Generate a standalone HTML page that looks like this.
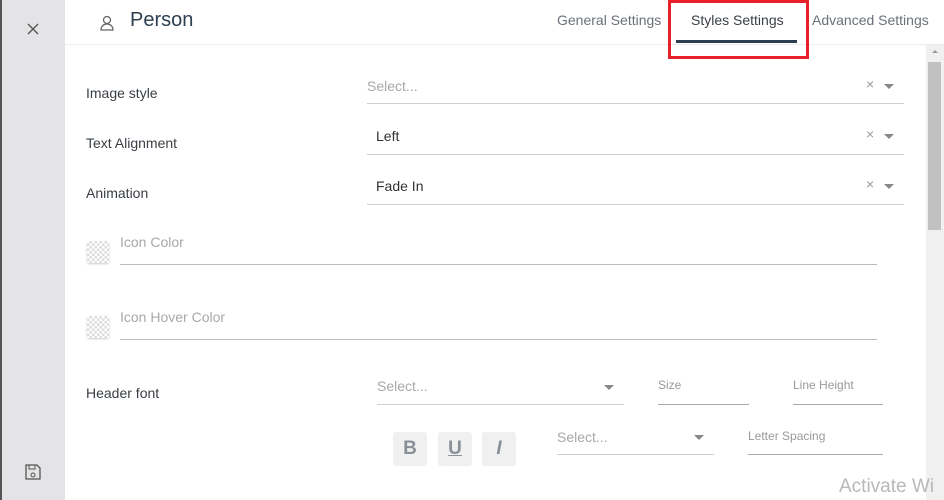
<!DOCTYPE html>
<html><head><style>
*{margin:0;padding:0;box-sizing:border-box}
body{width:944px;height:500px;overflow:hidden;background:#fff;font-family:"Liberation Sans",Arial,sans-serif;position:relative}
.a{position:absolute}
.lbl{font-size:14px;color:#3a3f45}
.ph{font-size:14px;color:#a8a8a8}
.val{font-size:14px;color:#333}
.line{height:1px;background:#d0d0d0}
.x{font-size:14px;color:#999}
.car{width:0;height:0;border-left:5px solid transparent;border-right:5px solid transparent;border-top:5px solid #888}
.sm{font-size:12px;color:#999}
.btn{width:34px;height:34px;background:#f0f0f0;border-radius:3px;color:#8a9099;font-weight:bold;font-size:19px;text-align:center;line-height:34px}
.sw{width:22px;height:22px;border-radius:2px;box-shadow:0 1px 2px rgba(0,0,0,.2);background:
repeating-conic-gradient(#ddd 0 25%,#fff 0 50%) 0 0/5px 5px}
</style></head><body>
<div class="a" style="left:0;top:0;width:65px;height:500px;background:#e4e4e6"></div>
<div class="a" style="left:0;top:0;width:2px;height:500px;background:#555"></div>
<svg class="a" style="left:27px;top:23px" width="12" height="12"><path d="M1 1L11 11M11 1L1 11" stroke="#555" stroke-width="1.4"/></svg>
<svg class="a" style="left:24px;top:463px" width="18" height="18" viewBox="0 0 18 18"><path d="M2 2h11l3 3v11H2z" fill="none" stroke="#555" stroke-width="1.3"/><rect x="5" y="2" width="6" height="4" fill="none" stroke="#555"/><circle cx="9" cy="12" r="2" fill="none" stroke="#555"/></svg>
<div class="a" style="left:65px;top:44px;width:879px;height:1px;background:#ececec"></div>
<svg class="a" style="left:99px;top:14px" width="16" height="18" viewBox="0 0 16 18"><circle cx="8" cy="6" r="3.5" fill="none" stroke="#666" stroke-width="1.3"/><path d="M2 16c0-4 3-6 6-6s6 2 6 6z" fill="none" stroke="#666" stroke-width="1.3"/></svg>
<div class="a" style="left:130px;top:9px;font-size:20px;color:#2c3e50">Person</div>
<div class="a" style="left:557px;top:12px;font-size:14px;color:#6b7178">General Settings</div>
<div class="a" style="left:691px;top:12px;font-size:14px;color:#3b4046">Styles Settings</div>
<div class="a" style="left:812px;top:12px;font-size:14px;color:#6b7178">Advanced Settings</div>
<div class="a" style="left:676px;top:40px;width:121px;height:3px;background:#2c3e50"></div>
<div class="a" style="left:668px;top:0;width:141px;height:59px;border:3px solid #e8202a"></div>
<div class="a" style="left:926px;top:45px;width:18px;height:455px;background:#f0f0f0"></div>
<div class="a" style="left:928px;top:62px;width:13px;height:168px;background:#c1c1c1"></div>
<div class="a" style="left:932px;top:50px;width:0;height:0;border-left:3px solid transparent;border-right:3px solid transparent;border-bottom:3px solid #999"></div>

<div class="a lbl" style="left:86px;top:85px">Image style</div>
<div class="a ph" style="left:367px;top:78px">Select...</div>
<div class="a x" style="left:866px;top:76px">×</div><div class="a car" style="left:884px;top:84px"></div>
<div class="a line" style="left:367px;top:103px;width:537px"></div>

<div class="a lbl" style="left:86px;top:135px">Text Alignment</div>
<div class="a val" style="left:376px;top:128px">Left</div>
<div class="a x" style="left:866px;top:126px">×</div><div class="a car" style="left:884px;top:134px"></div>
<div class="a line" style="left:367px;top:154px;width:537px"></div>

<div class="a lbl" style="left:86px;top:185px">Animation</div>
<div class="a val" style="left:376px;top:178px">Fade In</div>
<div class="a x" style="left:866px;top:176px">×</div><div class="a car" style="left:884px;top:184px"></div>
<div class="a line" style="left:367px;top:204px;width:537px"></div>

<div class="a sw" style="left:87px;top:241px"></div>
<div class="a ph" style="left:120px;top:234px">Icon Color</div>
<div class="a line" style="left:120px;top:264px;width:757px;background:#bbb"></div>
<div class="a sw" style="left:87px;top:316px"></div>
<div class="a ph" style="left:120px;top:309px">Icon Hover Color</div>
<div class="a line" style="left:120px;top:339px;width:757px;background:#bbb"></div>

<div class="a lbl" style="left:86px;top:385px">Header font</div>
<div class="a ph" style="left:377px;top:378px">Select...</div>
<div class="a car" style="left:604px;top:385px"></div>
<div class="a line" style="left:377px;top:404px;width:247px"></div>
<div class="a sm" style="left:658px;top:378px">Size</div>
<div class="a line" style="left:658px;top:404px;width:91px;background:#aaa"></div>
<div class="a sm" style="left:793px;top:378px">Line Height</div>
<div class="a line" style="left:793px;top:404px;width:90px;background:#aaa"></div>

<div class="a btn" style="left:393px;top:432px">B</div>
<div class="a btn" style="left:438px;top:432px;text-decoration:underline">U</div>
<div class="a btn" style="left:482px;top:432px;font-style:italic">I</div>
<div class="a ph" style="left:557px;top:429px">Select...</div>
<div class="a car" style="left:694px;top:435px"></div>
<div class="a line" style="left:557px;top:454px;width:157px"></div>
<div class="a sm" style="left:748px;top:429px">Letter Spacing</div>
<div class="a line" style="left:748px;top:454px;width:135px;background:#aaa"></div>

<div class="a" style="left:839px;top:476px;font-size:19px;color:#b8b8b8">Activate Wi</div>
</body></html>
